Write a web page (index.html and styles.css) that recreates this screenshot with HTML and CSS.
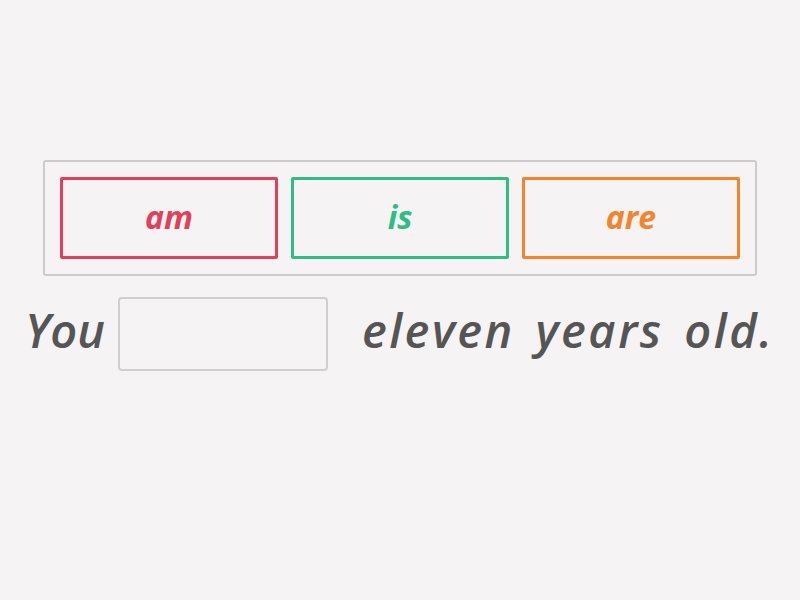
FILE: index.html
```html
<!DOCTYPE html>
<html lang="en">
<head>
  <meta charset="UTF-8">
  <title>Missing word</title>
  <link rel="stylesheet" href="styles.css">
</head>
<body>
  <div class="activity">
    <div class="word-bank">
      <div class="tile tile-red">am</div>
      <div class="tile tile-green">is</div>
      <div class="tile tile-orange">are</div>
    </div>

    <div class="sentence">
      <span class="word">You</span>
      <span class="blank"></span>
      <span class="word rest">eleven years old.</span>
    </div>
  </div>
</body>
</html>
```

FILE: styles.css
```css
:root {
  --background: #f5f3f4;
  --text: #555555;
  --border: #cccccc;
  --red: #e0405c;
  --green: #2fbd84;
  --orange: #f5832b;
}

* {
  margin: 0;
  padding: 0;
  box-sizing: border-box;
}

body {
  font-family: 'Open Sans', 'Noto Sans', sans-serif;
  font-style: italic;
  font-weight: 600;
  background-color: var(--background);
  color: var(--text);
  width: 800px;
  height: 600px;
  overflow: hidden;
}

.activity {
  padding: 160px 43px 0;
}

.word-bank {
  display: flex;
  gap: 13px;
  width: 714px;
  padding: 15px;
  border: 2px solid var(--border);
  border-radius: 3px;
}

.tile {
  width: 218px;
  height: 82px;
  display: flex;
  align-items: center;
  justify-content: center;
  padding-bottom: 3px;
  font-size: 32px;
  font-weight: 700;
  border: 3px solid;
  border-radius: 2px;
}

.tile-red {
  color: var(--red);
  border-color: var(--red);
}

.tile-green {
  color: var(--green);
  border-color: var(--green);
}

.tile-orange {
  color: var(--orange);
  border-color: var(--orange);
}

.sentence {
  display: flex;
  align-items: center;
  width: 780px;
  margin: 21px 0 0 -18px;
  font-size: 47px;
  line-height: 1;
  white-space: nowrap;
}

.word {
  flex-shrink: 0;
  padding-bottom: 8px;
}

.blank {
  flex-shrink: 0;
  width: 210px;
  height: 74px;
  margin-left: 13px;
  border: 2px solid #d0cfd0;
  border-radius: 4px;
}

.rest {
  margin-left: 34px;
  letter-spacing: 2.5px;
  word-spacing: 6px;
}
```
